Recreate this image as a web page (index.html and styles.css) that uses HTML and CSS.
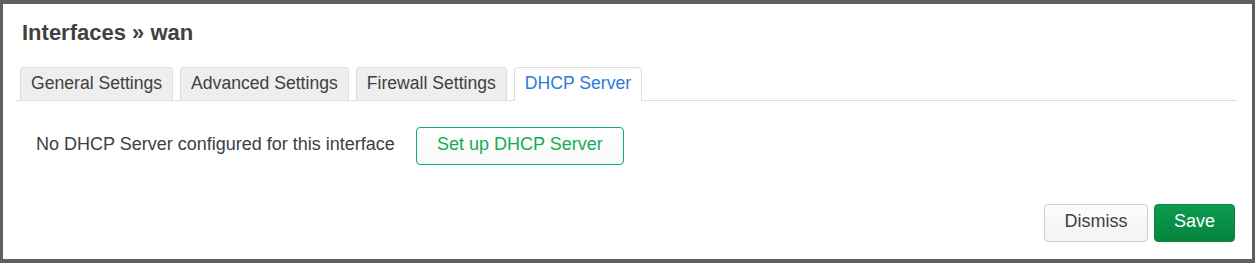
FILE: index.html
```html
<!DOCTYPE html>
<html>
<head>
<meta charset="utf-8">
<link rel="stylesheet" href="styles.css">
</head>
<body>
<div class="modal">
  <h4 class="title">Interfaces » wan</h4>
  <ul class="tabs">
    <li class="tab">General Settings</li>
    <li class="tab">Advanced Settings</li>
    <li class="tab">Firewall Settings</li>
    <li class="tab active">DHCP Server</li>
  </ul>
  <div class="content">
    <span class="msg">No DHCP Server configured for this interface</span>
    <button class="btn btn-outline-green">Set up DHCP Server</button>
  </div>
  <div class="footer">
    <button class="btn btn-default">Dismiss</button>
    <button class="btn btn-save">Save</button>
  </div>
</div>
</body>
</html>
```
FILE: styles.css
```css
html, body {
  margin: 0;
  padding: 0;
  height: 263px;
  overflow: hidden;
}
body {
  background: #5f5f5f;
  font-family: "Liberation Sans", Arial, sans-serif;
  color: #404040;
  padding: 4px 3px 0 3px;
  box-sizing: border-box;
}
.modal {
  background: #fff;
  height: 255px;
  box-sizing: border-box;
  padding: 0 15px 0 12px;
  display: flex;
  flex-direction: column;
}
.title {
  margin: 0;
  padding: 17px 0 22px 7px;
  font-size: 22px;
  font-weight: bold;
  color: #404040;
  line-height: 24px;
}
.tabs {
  list-style: none;
  margin: 0;
  padding: 0 0 0 5px;
  display: flex;
  gap: 7px;
  border-bottom: 1px solid #ddd;
}
.tab {
  font-size: 17.6px;
  line-height: 31px;
  height: 33px;
  box-sizing: border-box;
  padding: 0 10px 2px;
  background: #eee;
  border: 1px solid #ddd;
  border-bottom: none;
  border-radius: 4px 4px 0 0;
  color: #404040;
}
.tab.active {
  background: #fff;
  color: #2b7bd6;
  margin-bottom: -1px;
  height: 34px;
}
.content {
  display: flex;
  align-items: center;
  padding: 26px 0 0 21px;
  gap: 21px;
}
.msg {
  font-size: 18px;
  color: #404040;
  padding-bottom: 4px;
}
.btn {
  font-family: "Liberation Sans", Arial, sans-serif;
  font-size: 18px;
  border-radius: 4px;
  height: 38px;
  box-sizing: border-box;
  cursor: pointer;
  padding: 0 0 3px;
}
.btn-outline-green {
  width: 208px;
  border: 1px solid #15b05c;
  color: #13ad56;
  background: linear-gradient(#ffffff, #f8f8f8);
}
.footer {
  display: flex;
  justify-content: flex-end;
  gap: 6px;
  margin-top: auto;
  padding: 0 2px 17px 0;
}
.btn-default {
  width: 104px;
  border: 1px solid #ccc;
  background: linear-gradient(#fcfcfc, #f3f3f3);
  color: #404040;
}
.btn-save {
  width: 81px;
  border: 1px solid #07853f;
  background: linear-gradient(#0b9c4f, #06843d);
  color: #fff;
}
```
